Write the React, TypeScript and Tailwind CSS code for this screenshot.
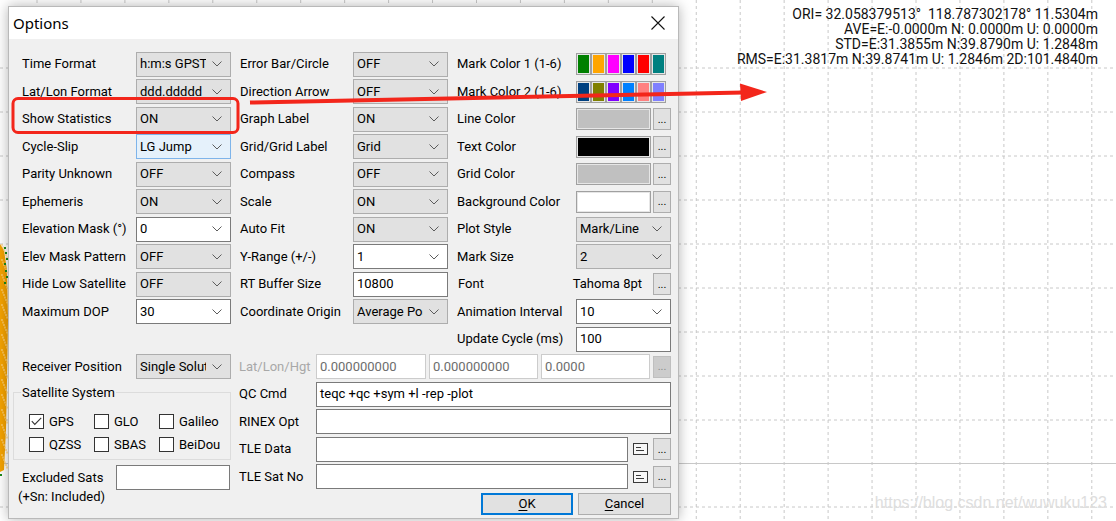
import React from 'react';

type ComboKind = 'gray' | 'white' | 'focus';

const Chevron = () => (
  <svg width="10" height="6" viewBox="0 0 10 6" className="shrink-0">
    <path d="M0.5 0.5 L5 5 L9.5 0.5" fill="none" stroke="#5c5c5c" strokeWidth="1" />
  </svg>
);

const Combo: React.FC<{ value: string; kind?: ComboKind }> = ({ value, kind = 'gray' }) => {
  const tone =
    kind === 'white'
      ? 'bg-white border-[#7a7a7a]'
      : kind === 'focus'
        ? 'bg-[#e5f1fb] border-[#7eb4ea]'
        : 'bg-[#e1e1e1] border-[#adadad]';
  return (
    <div className={`flex h-[25px] w-[95px] items-center border pl-[3px] pr-[8px] ${tone}`}>
      <span className="mr-[6px] flex-1 overflow-hidden whitespace-nowrap">{value}</span>
      <Chevron />
    </div>
  );
};

const Edit: React.FC<{ value?: string; w: string; disabled?: boolean }> = ({ value = '', w, disabled }) => (
  <div
    className={`flex h-[25px] items-center overflow-hidden whitespace-nowrap border bg-white pl-[3px] ${w} ${
      disabled ? 'border-[#cccccc] text-[#6d6d6d]' : 'border-[#7a7a7a]'
    }`}
  >
    {value}
  </div>
);

const DotsButton: React.FC<{ disabled?: boolean }> = ({ disabled }) => (
  <div
    className={`flex h-[22px] w-[18px] shrink-0 items-center justify-center border ${
      disabled ? 'border-[#bfbfbf] bg-[#cccccc] text-[#8a8a8a]' : 'border-[#adadad] bg-[#e1e1e1]'
    }`}
  >
    <span className="text-[11px] leading-none">...</span>
  </div>
);

const ColorBox: React.FC<{ fill: string }> = ({ fill }) => (
  <div className="flex items-center gap-[2px]">
    <div className="h-[22px] w-[75px] border border-[#a0a0a0] bg-[#e6e6e6] p-[1px]">
      <div className={`h-full w-full ${fill}`} />
    </div>
    <DotsButton />
  </div>
);

const Swatches: React.FC<{ fills: string[] }> = ({ fills }) => (
  <div className="flex h-[22px]">
    {fills.map((f, i) => (
      <div key={i} className="h-full w-[15px] border border-[#a0a0a0] bg-[#e6e6e6] p-[1px]">
        <div className={`h-full w-full ${f}`} />
      </div>
    ))}
  </div>
);

const Row: React.FC<{ label: string; lw: string; children?: React.ReactNode }> = ({ label, lw, children }) => (
  <div className="flex h-[27.5px] items-center">
    <span className={`shrink-0 whitespace-nowrap ${lw}`}>{label}</span>
    {children}
  </div>
);

const Check: React.FC<{ label: string; checked?: boolean }> = ({ label, checked }) => (
  <div className="flex w-[65px] items-center gap-[5px]">
    <div className="flex h-[15px] w-[15px] items-center justify-center border border-[#333333] bg-white">
      {checked && (
        <svg width="11" height="9" viewBox="0 0 11 9">
          <path d="M0.8 4.2 L3.8 7.4 L10.2 0.8" fill="none" stroke="#333333" strokeWidth="1.1" />
        </svg>
      )}
    </div>
    <span>{label}</span>
  </div>
);

const DocIcon = () => (
  <svg width="15" height="12" viewBox="0 0 15 12" className="shrink-0">
    <rect x="0.5" y="0.5" width="14" height="11" fill="#f7f7f7" stroke="#3a3a3a" />
    <line x1="3" y1="4.5" x2="8" y2="4.5" stroke="#3a3a3a" />
    <line x1="3" y1="7.5" x2="11" y2="7.5" stroke="#3a3a3a" />
  </svg>
);

const Plot = () => {
  const vx = Array.from({ length: 26 }, (_, i) => 37 + i * 43.95);
  const hy = [68, 112, 156, 200, 244, 288, 332, 376, 420, 507];
  const orange = Array.from({ length: 90 }, (_, i) => ({
    x: 1 + ((i * 37) % 6),
    y: 244 + i * 2.5,
  }));
  return (
    <svg width="1116" height="521" className="absolute left-0 top-0">
      <rect width="1116" height="521" fill="#ffffff" />
      {vx.map((x, i) => (
        <line key={`v${i}`} x1={x} y1={0} x2={x} y2={521} stroke="#c8c8c8" strokeDasharray="3 3" />
      ))}
      {hy.map((y, i) => (
        <line key={`h${i}`} x1={0} y1={y} x2={1116} y2={y} stroke="#c8c8c8" strokeDasharray="3 3" />
      ))}
      <line x1={0} y1={463.5} x2={1116} y2={463.5} stroke="#c8c8c8" />
      <path d="M0 244 L4 250 L7 270 L8 320 L7 380 L6 430 L4 470 L0 472 Z" fill="#f5a300" />
      {orange.map((p, i) => (
        <rect key={`o${i}`} x={p.x} y={p.y} width="2" height="2" fill="#ffd27a" opacity="0.6" />
      ))}
      {[247, 252, 258, 263, 270, 276, 282].map((y, i) => (
        <rect key={`g${i}`} x={4 + (i % 3)} y={y} width="2" height="2" fill="#1a8a1a" />
      ))}
      <rect x="0" y="474" width="2" height="2" fill="#1a8a1a" />
    </svg>
  );
};

export default function App() {
  return (
    <div className="relative h-[521px] w-[1116px] overflow-hidden bg-white font-[family-name:Roboto,sans-serif] text-[13px] text-black">
      <Plot />

      <div className="absolute right-[18px] top-[7px] whitespace-pre text-right text-[14px] leading-[15px] text-[#111111]">
        <div>ORI= 32.058379513°  118.787302178° 11.5304m</div>
        <div>AVE=E:-0.0000m N: 0.0000m U: 0.0000m</div>
        <div>STD=E:31.3855m N:39.8790m U: 1.2848m</div>
        <div>RMS=E:31.3817m N:39.8741m U: 1.2846m 2D:101.4840m</div>
      </div>

      <div className="absolute right-[9px] top-[491px] font-[family-name:'Liberation_Sans',sans-serif] text-[16px] text-[#dedede]">
        https://blog.csdn.net/wuwuku123
      </div>

      {/* dialog */}
      <div className="absolute left-[8px] top-[6px] flex h-[513px] w-[671px] flex-col border border-[#b9b9b9] bg-[#f0f0f0] shadow-[0_0_12px_rgba(0,0,0,0.3)]">
        <div className="flex h-[32px] shrink-0 items-center justify-between bg-white pl-[4px] pr-[13px]">
          <span className="font-[family-name:'Noto_Sans',sans-serif] text-[15px] text-black">Options</span>
          <svg width="14" height="14" viewBox="0 0 14 14">
            <path d="M0.5 0.5 L13.5 13.5 M13.5 0.5 L0.5 13.5" stroke="#111111" strokeWidth="1.1" />
          </svg>
        </div>

        <div className="flex flex-col pl-[4px] pt-[11.25px]">
          <div className="flex pl-[9px]">
            <div className="flex flex-col">
              <Row label="Time Format" lw="w-[114px]"><Combo value="h:m:s GPST" /></Row>
              <Row label="Lat/Lon Format" lw="w-[114px]"><Combo value="ddd.ddddd" /></Row>
              <Row label="Show Statistics" lw="w-[114px]"><Combo value="ON" /></Row>
              <Row label="Cycle-Slip" lw="w-[114px]"><Combo value="LG Jump" kind="focus" /></Row>
              <Row label="Parity Unknown" lw="w-[114px]"><Combo value="OFF" /></Row>
              <Row label="Ephemeris" lw="w-[114px]"><Combo value="ON" /></Row>
              <Row label="Elevation Mask (°)" lw="w-[114px]"><Combo value="0" kind="white" /></Row>
              <Row label="Elev Mask Pattern" lw="w-[114px]"><Combo value="OFF" /></Row>
              <Row label="Hide Low Satellite" lw="w-[114px]"><Combo value="OFF" /></Row>
              <Row label="Maximum DOP" lw="w-[114px]"><Combo value="30" kind="white" /></Row>
            </div>
            <div className="ml-[9px] flex flex-col">
              <Row label="Error Bar/Circle" lw="w-[113px]"><Combo value="OFF" /></Row>
              <Row label="Direction Arrow" lw="w-[113px]"><Combo value="OFF" /></Row>
              <Row label="Graph Label" lw="w-[113px]"><Combo value="ON" /></Row>
              <Row label="Grid/Grid Label" lw="w-[113px]"><Combo value="Grid" /></Row>
              <Row label="Compass" lw="w-[113px]"><Combo value="OFF" /></Row>
              <Row label="Scale" lw="w-[113px]"><Combo value="ON" /></Row>
              <Row label="Auto Fit" lw="w-[113px]"><Combo value="ON" /></Row>
              <Row label="Y-Range (+/-)" lw="w-[113px]"><Combo value="1" kind="white" /></Row>
              <Row label="RT Buffer Size" lw="w-[113px]"><Edit value="10800" w="w-[95px]" /></Row>
              <Row label="Coordinate Origin" lw="w-[113px]"><Combo value="Average Position" /></Row>
            </div>
            <div className="ml-[9px] flex flex-col">
              <Row label="Mark Color 1 (1-6)" lw="w-[119px]">
                <Swatches fills={['bg-[#008000]', 'bg-[#ffa500]', 'bg-[#ff00ff]', 'bg-[#0000ff]', 'bg-[#ff0000]', 'bg-[#008080]']} />
              </Row>
              <Row label="Mark Color 2 (1-6)" lw="w-[119px]">
                <Swatches fills={['bg-[#004080]', 'bg-[#808000]', 'bg-[#8000ff]', 'bg-[#0080ff]', 'bg-[#ff8080]', 'bg-[#8080ff]']} />
              </Row>
              <Row label="Line Color" lw="w-[119px]"><ColorBox fill="bg-[#c0c0c0]" /></Row>
              <Row label="Text Color" lw="w-[119px]"><ColorBox fill="bg-black" /></Row>
              <Row label="Grid Color" lw="w-[119px]"><ColorBox fill="bg-[#c0c0c0]" /></Row>
              <Row label="Background Color" lw="w-[119px]"><ColorBox fill="bg-white" /></Row>
              <Row label="Plot Style" lw="w-[119px]"><Combo value="Mark/Line" /></Row>
              <Row label="Mark Size" lw="w-[119px]"><Combo value="2" /></Row>
              <div className="flex h-[27.5px] w-[214px] items-center">
                <span className="pl-[1px]">Font</span>
                <span className="ml-auto whitespace-nowrap">Tahoma 8pt</span>
                <div className="ml-[11px]"><DotsButton /></div>
              </div>
              <Row label="Animation Interval" lw="w-[119px]"><Combo value="10" kind="white" /></Row>
              <Row label="Update Cycle (ms)" lw="w-[119px]"><Edit value="100" w="w-[95px]" /></Row>
            </div>
          </div>

          <div className="flex h-[27.5px] items-center pl-[9px]">
            <span className="w-[114px] whitespace-nowrap">Receiver Position</span>
            <Combo value="Single Solution" />
            <span className="ml-[8px] w-[77px] whitespace-nowrap text-[#a8a8a8]">Lat/Lon/Hgt</span>
            <Edit value="0.000000000" w="w-[110px]" disabled />
            <div className="ml-[3px]"><Edit value="0.000000000" w="w-[109px]" disabled /></div>
            <div className="ml-[3px]"><Edit value="0.0000" w="w-[109px]" disabled /></div>
            <div className="ml-[3px]"><DotsButton disabled /></div>
          </div>

          <div className="flex">
            <div className="flex w-[218px] flex-col">
              <fieldset className="mt-[5px] border border-[#dcdcdc] pb-[5px]">
                <legend className="ml-[7px] px-[1px] leading-[15px]">Satellite System</legend>
                <div className="flex flex-col gap-[3px] pl-[15px] pt-[11px]">
                  <div className="flex h-[20px] items-center">
                    <Check label="GPS" checked />
                    <Check label="GLO" />
                    <Check label="Galileo" />
                  </div>
                  <div className="flex h-[20px] items-center">
                    <Check label="QZSS" />
                    <Check label="SBAS" />
                    <Check label="BeiDou" />
                  </div>
                </div>
              </fieldset>
              <div className="mt-[5px] flex">
                <div className="flex w-[103px] flex-col pt-[3px] leading-[19px]">
                  <span className="pl-[9px]">Excluded Sats</span>
                  <span className="whitespace-nowrap pl-[5px]">(+Sn: Included)</span>
                </div>
                <Edit w="w-[114px]" />
              </div>
            </div>

            <div className="ml-[8px] flex w-[432px] flex-col">
              <Row label="QC Cmd" lw="w-[77px]"><Edit value="teqc +qc +sym +l -rep -plot" w="w-[355px]" /></Row>
              <Row label="RINEX Opt" lw="w-[77px]"><Edit w="w-[355px]" /></Row>
              <Row label="TLE Data" lw="w-[77px]">
                <Edit w="w-[312px]" />
                <div className="ml-[5px]"><DocIcon /></div>
                <div className="ml-[5px]"><DotsButton /></div>
              </Row>
              <Row label="TLE Sat No" lw="w-[77px]">
                <Edit w="w-[312px]" />
                <div className="ml-[5px]"><DocIcon /></div>
                <div className="ml-[5px]"><DotsButton /></div>
              </Row>
              <div className="flex h-[27.5px] items-center justify-end gap-[5px]">
                <div className="flex h-[22px] w-[92px] items-center justify-center border-2 border-[#0078d7] bg-[#e1e1e1]">
                  <span><span className="underline underline-offset-2">O</span>K</span>
                </div>
                <div className="flex h-[22px] w-[93px] items-center justify-center border border-[#adadad] bg-[#e1e1e1]">
                  <span><span className="underline underline-offset-2">C</span>ancel</span>
                </div>
              </div>
            </div>
          </div>
        </div>
      </div>

      {/* red annotation */}
      <svg width="1116" height="521" className="pointer-events-none absolute left-0 top-0">
        <rect x="13" y="98.5" width="225" height="34" rx="5" fill="none" stroke="#f3261b" strokeWidth="3" />
        <line x1="250" y1="102.5" x2="744" y2="92.5" stroke="#f3261b" strokeWidth="4" />
        <polygon points="740,83.5 767,92 741,101" fill="#f3261b" />
      </svg>
    </div>
  );
}
